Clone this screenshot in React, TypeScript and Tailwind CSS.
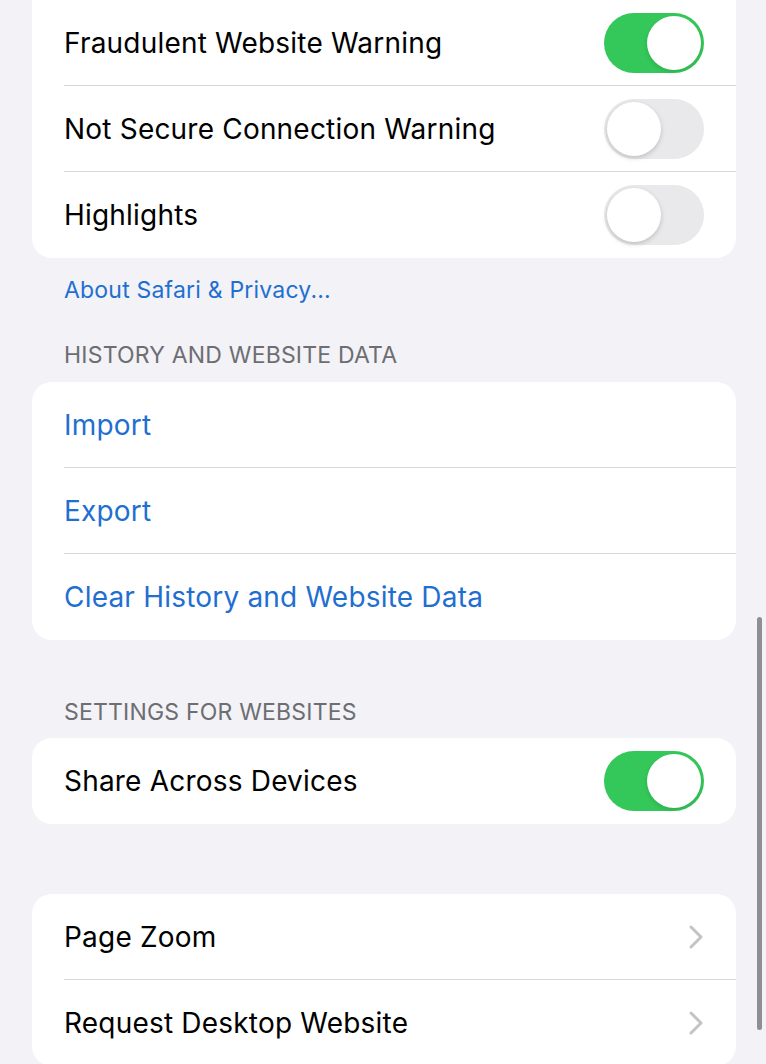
import React from "react";

const font = { fontFamily: "Inter, 'Noto Sans', sans-serif" };

function Toggle({ on }: { on: boolean }) {
  return on ? (
    <div className="w-[100px] h-[60px] rounded-full bg-[#34c759] p-[3px] flex justify-end">
      <div className="w-[54px] h-[54px] rounded-full bg-white shadow-[0_2px_4px_rgba(0,0,0,0.12)]" />
    </div>
  ) : (
    <div className="w-[100px] h-[60px] rounded-full bg-[#e9e9eb] p-[3px] flex justify-start">
      <div className="w-[54px] h-[54px] rounded-full bg-white shadow-[0_2px_5px_rgba(0,0,0,0.18)]" />
    </div>
  );
}

function Chevron() {
  return (
    <svg width="16" height="26" viewBox="0 0 16 26" fill="none">
      <path d="M3 3 L13 13 L3 23" stroke="#c4c4c7" strokeWidth="3" strokeLinecap="round" strokeLinejoin="round" />
    </svg>
  );
}

function Row({
  label,
  blue,
  last,
  right,
}: {
  label: string;
  blue?: boolean;
  last?: boolean;
  right?: React.ReactNode;
}) {
  return (
    <div className="pl-8">
      <div
        className={`h-[86px] flex items-center justify-between pr-8 ${
          last ? "" : "border-b border-[#d8d8dc]"
        }`}
      >
        <span className={`text-[28px] tracking-[0.2px] ${blue ? "text-[#1f6fd0]" : "text-black"}`}>{label}</span>
        {right}
      </div>
    </div>
  );
}

export default function App() {
  return (
    <div className="relative w-[766px] h-[1064px] overflow-hidden bg-[#f2f2f7]" style={font}>
      <div className="pl-8 pr-[30px]">
        <div className="bg-white rounded-b-[20px]">
          <Row label="Fraudulent Website Warning" right={<Toggle on />} />
          <Row label="Not Secure Connection Warning" right={<Toggle on={false} />} />
          <Row label="Highlights" last right={<Toggle on={false} />} />
        </div>

        <div className="mt-[18px] pl-8 leading-[28px] text-[23px] tracking-[0.2px] text-[#1f6fd0]">About Safari &amp; Privacy...</div>

        <div className="mt-[37px] pl-8 leading-[28px] text-[23px] tracking-[0.2px] text-[#6d6d72] uppercase">History and Website Data</div>

        <div className="mt-[13px] bg-white rounded-[20px]">
          <Row label="Import" blue />
          <Row label="Export" blue />
          <Row label="Clear History and Website Data" blue last />
        </div>

        <div className="mt-[58px] pl-8 leading-[28px] text-[23px] tracking-[0.2px] text-[#6d6d72] uppercase">Settings for Websites</div>

        <div className="mt-[12px] bg-white rounded-[20px]">
          <Row label="Share Across Devices" last right={<Toggle on />} />
        </div>

        <div className="mt-[70px] bg-white rounded-[20px]">
          <Row label="Page Zoom" right={<Chevron />} />
          <Row label="Request Desktop Website" last right={<Chevron />} />
        </div>
      </div>

      <div className="absolute left-[757px] top-[617px] w-[5px] h-[413px] rounded-full bg-[#8e8e93]" />
    </div>
  );
}
